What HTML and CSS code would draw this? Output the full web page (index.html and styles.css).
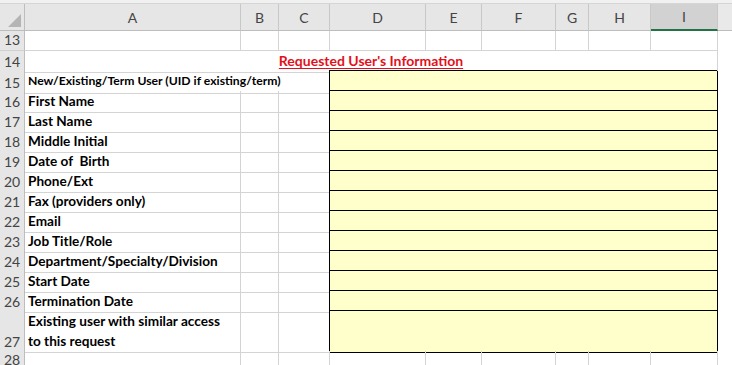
FILE: index.html
```html
<!DOCTYPE html>
<html lang="en">

<head>
    <meta charset="UTF-8">
    <meta name="viewport" content="width=device-width, initial-scale=1">
    <title>User Access Request</title>
    <link rel="stylesheet" href="styles.css">
</head>

<body>
    <div class="topbar"></div>
    <div class="sheet">
        <div class="row head">
            <div class="corner"><span class="tri"></span></div>
            <div class="col">A</div>
            <div class="col">B</div>
            <div class="col">C</div>
            <div class="col">D</div>
            <div class="col">E</div>
            <div class="col">F</div>
            <div class="col">G</div>
            <div class="col">H</div>
            <div class="col selected">I</div>
            <div class="col rest"></div>
        </div>

        <div class="row">
            <div class="num">13</div>
            <div class="cell"></div>
            <div class="cell"></div>
            <div class="cell"></div>
            <div class="cell"></div>
            <div class="cell"></div>
            <div class="cell"></div>
            <div class="cell"></div>
            <div class="cell"></div>
            <div class="cell"></div>
            <div class="cell rest"></div>
        </div>

        <div class="row">
            <div class="num">14</div>
            <div class="cell title span-ai"><span>Requested User's Information</span></div>
            <div class="cell rest"></div>
        </div>

        <div class="row">
            <div class="num">15</div>
            <div class="cell label small span-ac">New/Existing/Term User (UID if existing/term)</div>
            <div class="cell input"></div>
            <div class="cell rest"></div>
        </div>

        <div class="row">
            <div class="num">16</div>
            <div class="cell label">First Name</div>
            <div class="cell"></div>
            <div class="cell"></div>
            <div class="cell input"></div>
            <div class="cell rest"></div>
        </div>

        <div class="row">
            <div class="num">17</div>
            <div class="cell label">Last Name</div>
            <div class="cell"></div>
            <div class="cell"></div>
            <div class="cell input"></div>
            <div class="cell rest"></div>
        </div>

        <div class="row">
            <div class="num">18</div>
            <div class="cell label">Middle Initial</div>
            <div class="cell"></div>
            <div class="cell"></div>
            <div class="cell input"></div>
            <div class="cell rest"></div>
        </div>

        <div class="row">
            <div class="num">19</div>
            <div class="cell label">Date of&nbsp; Birth</div>
            <div class="cell"></div>
            <div class="cell"></div>
            <div class="cell input"></div>
            <div class="cell rest"></div>
        </div>

        <div class="row">
            <div class="num">20</div>
            <div class="cell label">Phone/Ext</div>
            <div class="cell"></div>
            <div class="cell"></div>
            <div class="cell input"></div>
            <div class="cell rest"></div>
        </div>

        <div class="row">
            <div class="num">21</div>
            <div class="cell label">Fax (providers only)</div>
            <div class="cell"></div>
            <div class="cell"></div>
            <div class="cell input"></div>
            <div class="cell rest"></div>
        </div>

        <div class="row">
            <div class="num">22</div>
            <div class="cell label">Email</div>
            <div class="cell"></div>
            <div class="cell"></div>
            <div class="cell input"></div>
            <div class="cell rest"></div>
        </div>

        <div class="row">
            <div class="num">23</div>
            <div class="cell label">Job Title/Role</div>
            <div class="cell"></div>
            <div class="cell"></div>
            <div class="cell input"></div>
            <div class="cell rest"></div>
        </div>

        <div class="row">
            <div class="num">24</div>
            <div class="cell label">Department/Specialty/Division</div>
            <div class="cell"></div>
            <div class="cell"></div>
            <div class="cell input"></div>
            <div class="cell rest"></div>
        </div>

        <div class="row">
            <div class="num">25</div>
            <div class="cell label">Start Date</div>
            <div class="cell"></div>
            <div class="cell"></div>
            <div class="cell input"></div>
            <div class="cell rest"></div>
        </div>

        <div class="row">
            <div class="num">26</div>
            <div class="cell label">Termination Date</div>
            <div class="cell"></div>
            <div class="cell"></div>
            <div class="cell input"></div>
            <div class="cell rest"></div>
        </div>

        <div class="row tall">
            <div class="num">27</div>
            <div class="cell label">Existing user with similar access<br>to this request</div>
            <div class="cell"></div>
            <div class="cell"></div>
            <div class="cell input"></div>
            <div class="cell rest"></div>
        </div>

        <div class="row last">
            <div class="num">28</div>
            <div class="cell"></div>
            <div class="cell"></div>
            <div class="cell"></div>
            <div class="cell"></div>
            <div class="cell"></div>
            <div class="cell"></div>
            <div class="cell"></div>
            <div class="cell"></div>
            <div class="cell"></div>
            <div class="cell rest"></div>
        </div>
    </div>
</body>

</html>
```

FILE: styles.css
```css
* {
    box-sizing: border-box;
}

body {
    margin: 0;
    padding: 0;
    background: #fff;
    font-family: Lato, "Open Sans", sans-serif;
    font-size: 14px;
    color: #000;
    overflow: hidden;
}

.topbar {
    height: 4px;
    background: #f1f1f1;
    border-bottom: 1px solid #d5d5d5;
}

/* every row shares the same column widths */
.row {
    display: grid;
    grid-template-columns: 25px 216px 38px 51px 96px 56px 74px 33px 62px 67px 1fr;
    height: 20px;
}

.row.tall {
    height: 40px;
}

.head {
    height: 27px;
    background: #e6e6e6;
}

.corner {
    position: relative;
    border-right: 1px solid #bdbdbd;
    border-bottom: 1px solid #bdbdbd;
}

.corner .tri {
    position: absolute;
    right: 3px;
    bottom: 3px;
    width: 0;
    height: 0;
    border-left: 13px solid transparent;
    border-bottom: 13px solid #b4b4b4;
}

.col {
    display: flex;
    align-items: center;
    justify-content: center;
    color: #444;
    font-size: 14px;
    border-right: 1px solid #c8c8c8;
    border-bottom: 1px solid #bdbdbd;
}

.col.selected {
    background: #d2d2d2;
    border-bottom: 2px solid #217346;
}

.col.rest {
    border-right: none;
    background: #e9e9e9;
}

.num {
    display: flex;
    align-items: flex-end;
    justify-content: center;
    padding-bottom: 1px;
    background: #e6e6e6;
    color: #444;
    font-size: 14px;
    line-height: 18px;
    border-right: 1px solid #bdbdbd;
    border-bottom: 1px solid #d0d0d0;
}

.cell {
    border-right: 1px solid #d4d4d4;
    border-bottom: 1px solid #d4d4d4;
}

.cell.rest {
    border: none;
}

.span-ai {
    grid-column: 2 / 11;
}

.span-ac {
    grid-column: 2 / 5;
}

.label {
    display: flex;
    align-items: flex-end;
    padding: 0 0 1px 3px;
    font-size: 13.6px;
    font-weight: bold;
    line-height: 20px;
    white-space: nowrap;
}

.label.small {
    font-size: 12.2px;
    padding-bottom: 2px;
}

.title {
    display: flex;
    align-items: flex-end;
    justify-content: center;
    padding-bottom: 1px;
    font-weight: bold;
    line-height: 20px;
}

.title span {
    color: #e3101c;
    text-decoration: underline;
    text-underline-offset: 2px;
}

.input {
    grid-column: 5 / 11;
    background: #ffffcc;
    border-right: 1px solid #000;
    border-bottom: 1px solid #000;
    box-shadow: -1px -1px 0 #000;
}
```
